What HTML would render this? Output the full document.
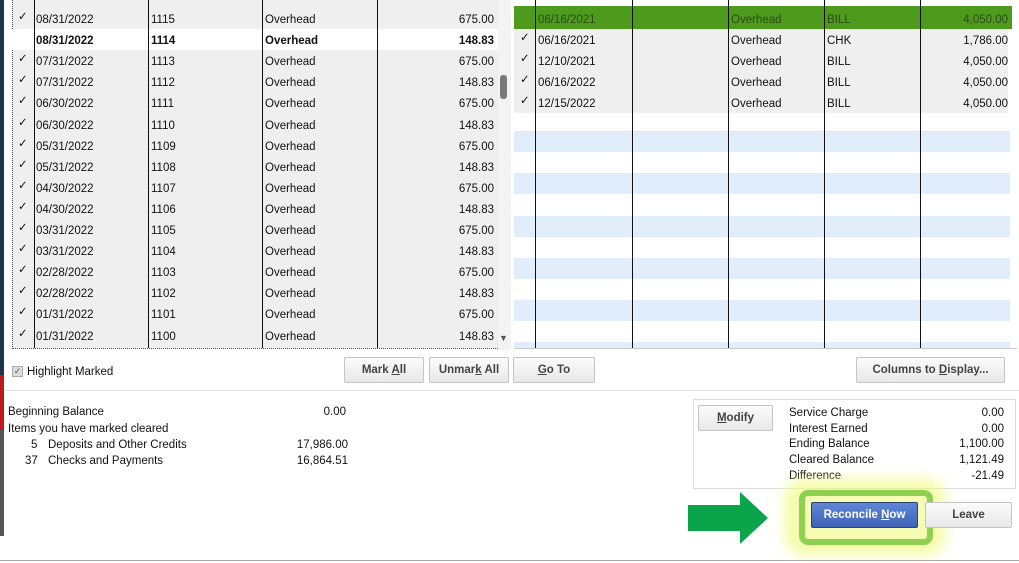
<!DOCTYPE html>
<html><head><style>
*{margin:0;padding:0;box-sizing:border-box}
body{width:1019px;height:563px;background:#fff;font-family:"Liberation Sans",Arial,sans-serif;font-size:11.5px;color:#111;position:relative;overflow:hidden}
.a{position:absolute}
.row{position:absolute;height:21px;line-height:24px}
.vl{position:absolute;width:1px;background:#111}
.btn{position:absolute;border:1px solid #c4c4c4;border-radius:2px;background:linear-gradient(#fbfbfb,#e8e8e8);font-weight:bold;color:#444;text-align:center;font-size:11.5px}
.r{text-align:right}
</style></head><body>
<div class="a" style="left:0;top:0;width:4px;height:375px;background:#1e3550"></div>
<div class="a" style="left:0;top:375px;width:4px;height:55px;background:#c0191c"></div>
<div class="a" style="left:0;top:430px;width:4px;height:106px;background:#555"></div>

<div class="a" style="left:12px;top:0;width:486px;height:349px;background:#efefef;border-bottom:1px dotted #555;border-left:1px dotted #555"></div>
<div class="a" style="left:12px;top:29px;width:486px;height:21px;background:#fff"></div>
<div class="vl" style="left:34px;top:0;height:348px"></div>
<div class="vl" style="left:148px;top:0;height:348px"></div>
<div class="vl" style="left:262px;top:0;height:348px"></div>
<div class="vl" style="left:377px;top:0;height:348px"></div>
<div class="a" style="left:498px;top:0;width:13px;height:350px;background:#f3f3f3"></div>
<div class="a" style="left:500px;top:75px;width:7px;height:24px;background:#7a7a7a;border-radius:3px"></div>
<div class="a" style="left:499px;top:333px;font-size:9px;color:#555">▼</div>
<div id="L"></div>

<div class="a" style="left:514px;top:0;width:503px;height:349px;background:#fff;border-bottom:1px solid #ccc;overflow:hidden"><div id="R" class="a" style="left:-514px;top:0;width:1019px;height:349px"></div></div>
<div class="a" style="left:514px;top:6px;width:498px;height:23px;background:#4e9a1c"></div>
<div class="a" style="left:514px;top:29px;width:494px;height:84px;background:#efefef"></div>
<div class="vl" style="left:535px;top:0;height:348px"></div>
<div class="vl" style="left:632px;top:0;height:348px"></div>
<div class="vl" style="left:728px;top:0;height:348px"></div>
<div class="vl" style="left:824px;top:0;height:348px"></div>
<div class="vl" style="left:920px;top:0;height:348px"></div>
<div id="R2"></div>

<div class="a" style="left:12px;top:366px;width:11px;height:11px;border:1px solid #aaa;background:#ddd;font-size:9px;line-height:9px;text-align:center;color:#555">✓</div>
<div class="a" style="left:27px;top:366px">Highlight Marked</div>
<div class="btn" style="left:344px;top:357px;width:80px;height:26px;line-height:24px">Mark <u>A</u>ll</div>
<div class="btn" style="left:429px;top:357px;width:80px;height:26px;line-height:24px">Unmar<u>k</u> All</div>
<div class="btn" style="left:513px;top:357px;width:82px;height:26px;line-height:24px"><u>G</u>o To</div>
<div class="btn" style="left:856px;top:357px;width:149px;height:26px;line-height:24px">Columns to <u>D</u>isplay...</div>
<div class="a" style="left:5px;top:390px;width:1014px;height:1px;background:#e2e2e2"></div>

<div class="a" style="left:8px;top:406px">Beginning Balance</div>
<div class="a r" style="left:280px;top:406px;width:66px">0.00</div>
<div class="a" style="left:8px;top:423px">Items you have marked cleared</div>
<div class="a" style="left:31px;top:439px">5</div>
<div class="a" style="left:48px;top:439px">Deposits and Other Credits</div>
<div class="a r" style="left:250px;top:439px;width:98px">17,986.00</div>
<div class="a" style="left:25px;top:455px">37</div>
<div class="a" style="left:48px;top:455px">Checks and Payments</div>
<div class="a r" style="left:250px;top:455px;width:98px">16,864.51</div>

<div class="a" style="left:693px;top:399px;width:323px;height:90px;border:1px solid #ddd"></div>
<div class="btn" style="left:698px;top:405px;width:75px;height:26px;line-height:24px"><u>M</u>odify</div>
<div class="a" style="left:789px;top:406px;line-height:15.7px">Service Charge<br>Interest Earned<br>Ending Balance<br>Cleared Balance<br>Difference</div>
<div class="a r" style="left:920px;top:406px;width:84px;line-height:15.7px">0.00<br>0.00<br>1,100.00<br>1,121.49<br>-21.49</div>

<svg class="a" style="left:688px;top:492px" width="80" height="54"><polygon points="0,13 52,13 52,0 80,26 52,52 52,39 0,39" fill="#0aa44a"/></svg>
<div class="a" style="left:790px;top:484px;width:150px;height:66px;border-radius:14px;background:rgba(240,250,120,.55);box-shadow:0 0 12px 6px rgba(240,250,120,.6)"></div>
<div class="a" style="left:799px;top:490px;width:134px;height:55px;border:6px solid #8fd14f;border-radius:9px"></div>
<div class="a" style="left:811px;top:502px;width:107px;height:26px;border:1px solid #2a4470;border-radius:2px;background:linear-gradient(#5f86d6,#3d62b8);color:#fff;font-weight:bold;text-align:center;line-height:24px">Reconcile <u>N</u>ow</div>
<div class="btn" style="left:925px;top:502px;width:87px;height:26px;line-height:24px">Leave</div>
<div class="a" style="left:0;top:560px;width:1019px;height:1px;background:#aaa"></div>

<script>
var L=[["08/31/2022","1115","675.00",1],["08/31/2022","1114","148.83",0],["07/31/2022","1113","675.00",1],["07/31/2022","1112","148.83",1],["06/30/2022","1111","675.00",1],["06/30/2022","1110","148.83",1],["05/31/2022","1109","675.00",1],["05/31/2022","1108","148.83",1],["04/30/2022","1107","675.00",1],["04/30/2022","1106","148.83",1],["03/31/2022","1105","675.00",1],["03/31/2022","1104","148.83",1],["02/28/2022","1103","675.00",1],["02/28/2022","1102","148.83",1],["01/31/2022","1101","675.00",1],["01/31/2022","1100","148.83",1]];
var h="";
L.forEach(function(r,i){var t=8+i*21.1;var b=r[3]?"":"font-weight:bold;";
h+='<div class="row" style="top:'+t+'px;left:0;width:500px;'+b+'">'+(r[3]?'<span class="a" style="left:18px;top:-3px">✓</span>':'')+'<span class="a" style="left:36px">'+r[0]+'</span><span class="a" style="left:151px">'+r[1]+'</span><span class="a" style="left:265px">Overhead</span><span class="a r" style="left:400px;width:94px">'+r[2]+'</span></div>';});
document.getElementById("L").innerHTML=h;
var s="";for(var i=5;i<17;i++){var t=110+(i-5)*21.1;if(i%2==0)s+='<div class="a" style="left:514px;top:'+(t)+'px;width:496px;height:21px;background:#e2edfb"></div>';}
document.getElementById("R").innerHTML=s;
var R=[["06/16/2021","BILL","4,050.00",0],["06/16/2021","CHK","1,786.00",1],["12/10/2021","BILL","4,050.00",1],["06/16/2022","BILL","4,050.00",1],["12/15/2022","BILL","4,050.00",1]];
var g="";R.forEach(function(r,i){var t=8+i*21.1;var c=i==0?"color:#2d4a14;":"";
g+='<div class="row" style="top:'+t+'px;left:0;width:1019px;'+c+'">'+(r[3]?'<span class="a" style="left:520px;top:-3px">✓</span>':'')+'<span class="a" style="left:538px">'+r[0]+'</span><span class="a" style="left:731px">Overhead</span><span class="a" style="left:827px">'+r[1]+'</span><span class="a r" style="left:910px;width:98px">'+r[2]+'</span></div>';});
document.getElementById("R2").innerHTML=g;
</script>
</body></html>
